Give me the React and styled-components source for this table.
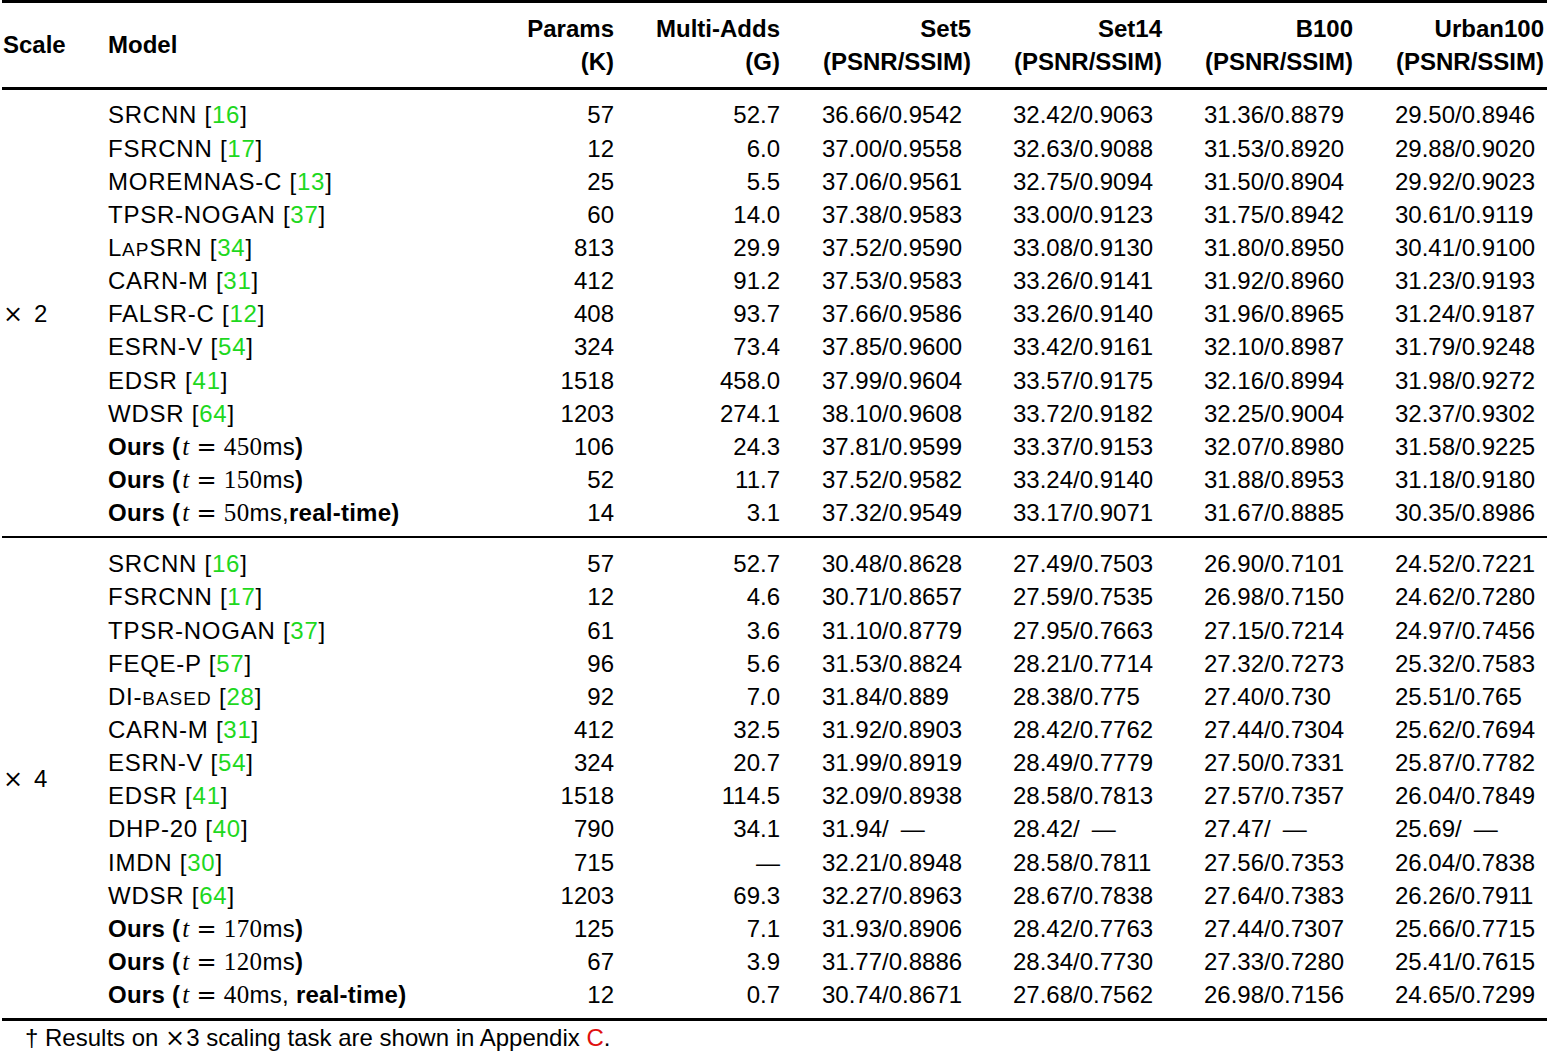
import React from "react";
import styled, { createGlobalStyle } from "styled-components";

const GlobalStyle = createGlobalStyle`
  html, body {
    margin: 0;
    padding: 0;
    background: #ffffff;
  }
  body {
    font-family: "Liberation Sans", Arial, Helvetica, sans-serif;
    color: #000000;
  }
`;

const COLS = "63px 377px 87px 124px 149px 149px 149px 149px";

const Page = styled.div`
  width: 1547px;
  font-size: 24px;
`;

const Rule = styled.div`
  margin-left: 2px;
  height: ${(p) => p.thick}px;
  background: #000000;
`;

const HeaderRow = styled.div`
  display: grid;
  grid-template-columns: ${COLS};
  column-gap: 42px;
  padding: 8.5px 0 9.5px 3px;
  height: 66px;
  font-weight: 700;
  line-height: 33px;
`;

const HeadCell = styled.div`
  display: flex;
  flex-direction: column;
  justify-content: center;
  text-align: ${(p) => (p.right ? "right" : "left")};
  white-space: nowrap;
`;

const Block = styled.div`
  display: grid;
  grid-template-columns: ${COLS};
  grid-auto-rows: 33.17px;
  column-gap: 42px;
  padding: ${(p) => p.top}px 0 ${(p) => p.bottom}px 3px;
  line-height: 33.17px;
`;

const ScaleCell = styled.div`
  grid-column: 1;
  grid-row: 1 / span ${(p) => p.span};
  align-self: center;
  white-space: nowrap;
`;

const Times = styled.span`
  font-family: "DejaVu Serif", "Liberation Serif", serif;
  font-size: 24px;
  margin-right: 11px;
`;

const ModelCell = styled.div`
  grid-column: 2;
  white-space: nowrap;
  letter-spacing: ${(p) => (p.ours ? 0.25 : 0.75)}px;
`;

const NumCell = styled.div`
  text-align: right;
  white-space: nowrap;
`;

const DataCell = styled.div`
  text-align: left;
  white-space: nowrap;
`;

const SmallCaps = styled.span`
  text-transform: uppercase;
  font-size: 19px;
  letter-spacing: 1px;
`;

const Cite = styled.span`
  color: #1ed81e;
`;

const Bold = styled.span`
  font-weight: 700;
`;

const MathT = styled.span`
  font-family: "Liberation Serif", "DejaVu Serif", serif;
  font-style: italic;
  font-size: 25px;
  margin-left: 2px;
`;

const MathEq = styled.span`
  font-family: "DejaVu Serif", "Liberation Serif", serif;
  font-size: 24px;
  margin: 0 7px;
`;

const MathNum = styled.span`
  font-family: "Liberation Serif", "DejaVu Serif", serif;
  font-size: 25px;
  letter-spacing: 0.4px;
`;

const Dash = styled.span`
  margin-left: 12px;
`;

const Footnote = styled.div`
  padding-left: 25px;
  line-height: 33px;
  white-space: nowrap;
`;

const Red = styled.span`
  color: #e01010;
`;

const Cross = styled.span`
  font-family: "DejaVu Serif", "Liberation Serif", serif;
  font-size: 24px;
  margin-right: 1px;
`;

const x2Rows = [
  [{ name: "SRCNN", cite: 16 }, "57", "52.7", "36.66/0.9542", "32.42/0.9063", "31.36/0.8879", "29.50/0.8946"],
  [{ name: "FSRCNN", cite: 17 }, "12", "6.0", "37.00/0.9558", "32.63/0.9088", "31.53/0.8920", "29.88/0.9020"],
  [{ name: "MOREMNAS-C", cite: 13 }, "25", "5.5", "37.06/0.9561", "32.75/0.9094", "31.50/0.8904", "29.92/0.9023"],
  [{ name: "TPSR-NOGAN", cite: 37 }, "60", "14.0", "37.38/0.9583", "33.00/0.9123", "31.75/0.8942", "30.61/0.9119"],
  [{ name: "L", scPart: "ap", rest: "SRN", cite: 34 }, "813", "29.9", "37.52/0.9590", "33.08/0.9130", "31.80/0.8950", "30.41/0.9100"],
  [{ name: "CARN-M", cite: 31 }, "412", "91.2", "37.53/0.9583", "33.26/0.9141", "31.92/0.8960", "31.23/0.9193"],
  [{ name: "FALSR-C", cite: 12 }, "408", "93.7", "37.66/0.9586", "33.26/0.9140", "31.96/0.8965", "31.24/0.9187"],
  [{ name: "ESRN-V", cite: 54 }, "324", "73.4", "37.85/0.9600", "33.42/0.9161", "32.10/0.8987", "31.79/0.9248"],
  [{ name: "EDSR", cite: 41 }, "1518", "458.0", "37.99/0.9604", "33.57/0.9175", "32.16/0.8994", "31.98/0.9272"],
  [{ name: "WDSR", cite: 64 }, "1203", "274.1", "38.10/0.9608", "33.72/0.9182", "32.25/0.9004", "32.37/0.9302"],
  [{ ours: "450" }, "106", "24.3", "37.81/0.9599", "33.37/0.9153", "32.07/0.8980", "31.58/0.9225"],
  [{ ours: "150" }, "52", "11.7", "37.52/0.9582", "33.24/0.9140", "31.88/0.8953", "31.18/0.9180"],
  [{ ours: "50", rt: "," }, "14", "3.1", "37.32/0.9549", "33.17/0.9071", "31.67/0.8885", "30.35/0.8986"],
];

const x4Rows = [
  [{ name: "SRCNN", cite: 16 }, "57", "52.7", "30.48/0.8628", "27.49/0.7503", "26.90/0.7101", "24.52/0.7221"],
  [{ name: "FSRCNN", cite: 17 }, "12", "4.6", "30.71/0.8657", "27.59/0.7535", "26.98/0.7150", "24.62/0.7280"],
  [{ name: "TPSR-NOGAN", cite: 37 }, "61", "3.6", "31.10/0.8779", "27.95/0.7663", "27.15/0.7214", "24.97/0.7456"],
  [{ name: "FEQE-P", cite: 57 }, "96", "5.6", "31.53/0.8824", "28.21/0.7714", "27.32/0.7273", "25.32/0.7583"],
  [{ name: "DI-", scPart: "based", cite: 28 }, "92", "7.0", "31.84/0.889", "28.38/0.775", "27.40/0.730", "25.51/0.765"],
  [{ name: "CARN-M", cite: 31 }, "412", "32.5", "31.92/0.8903", "28.42/0.7762", "27.44/0.7304", "25.62/0.7694"],
  [{ name: "ESRN-V", cite: 54 }, "324", "20.7", "31.99/0.8919", "28.49/0.7779", "27.50/0.7331", "25.87/0.7782"],
  [{ name: "EDSR", cite: 41 }, "1518", "114.5", "32.09/0.8938", "28.58/0.7813", "27.57/0.7357", "26.04/0.7849"],
  [{ name: "DHP-20", cite: 40 }, "790", "34.1", "31.94/-", "28.42/-", "27.47/-", "25.69/-"],
  [{ name: "IMDN", cite: 30 }, "715", "—", "32.21/0.8948", "28.58/0.7811", "27.56/0.7353", "26.04/0.7838"],
  [{ name: "WDSR", cite: 64 }, "1203", "69.3", "32.27/0.8963", "28.67/0.7838", "27.64/0.7383", "26.26/0.7911"],
  [{ ours: "170" }, "125", "7.1", "31.93/0.8906", "28.42/0.7763", "27.44/0.7307", "25.66/0.7715"],
  [{ ours: "120" }, "67", "3.9", "31.77/0.8886", "28.34/0.7730", "27.33/0.7280", "25.41/0.7615"],
  [{ ours: "40", rt: ", " }, "12", "0.7", "30.74/0.8671", "27.68/0.7562", "26.98/0.7156", "24.65/0.7299"],
];

function Model({ m }) {
  if (m.ours) {
    return (
      <ModelCell ours>
        <Bold>Ours (</Bold>
        <MathT>t</MathT>
        <MathEq>=</MathEq>
        <MathNum>{m.ours}</MathNum>
        ms
        {m.rt && (
          <>
            {m.rt}
            <Bold>real-time</Bold>
          </>
        )}
        <Bold>)</Bold>
      </ModelCell>
    );
  }
  return (
    <ModelCell>
      {m.name}
      {m.scPart && <SmallCaps>{m.scPart}</SmallCaps>}
      {m.rest} [<Cite>{m.cite}</Cite>]
    </ModelCell>
  );
}

function Result({ value }) {
  if (value.endsWith("/-")) {
    return (
      <DataCell>
        {value.slice(0, -1)}
        <Dash>—</Dash>
      </DataCell>
    );
  }
  return <DataCell>{value}</DataCell>;
}

function ScaleBlock({ scale, rows, top, bottom }) {
  return (
    <Block top={top} bottom={bottom}>
      <ScaleCell span={rows.length}>
        <Times>×</Times>
        {scale}
      </ScaleCell>
      {rows.map((r, i) => (
        <React.Fragment key={i}>
          <Model m={r[0]} />
          <NumCell>{r[1]}</NumCell>
          <NumCell>{r[2]}</NumCell>
          {r.slice(3).map((v, j) => (
            <Result key={j} value={v} />
          ))}
        </React.Fragment>
      ))}
    </Block>
  );
}

export default function App() {
  return (
    <>
      <GlobalStyle />
      <Page>
        <Rule thick={3} />
        <HeaderRow>
          <HeadCell>Scale</HeadCell>
          <HeadCell>Model</HeadCell>
          <HeadCell right>
            <div>Params</div>
            <div>(K)</div>
          </HeadCell>
          <HeadCell right>
            <div>Multi-Adds</div>
            <div>(G)</div>
          </HeadCell>
          {["Set5", "Set14", "B100", "Urban100"].map((d) => (
            <HeadCell right key={d}>
              <div>{d}</div>
              <div>(PSNR/SSIM)</div>
            </HeadCell>
          ))}
        </HeaderRow>
        <Rule thick={3} />
        <ScaleBlock scale="2" rows={x2Rows} top={8.4} bottom={6.4} />
        <Rule thick={2} />
        <ScaleBlock scale="4" rows={x4Rows} top={9.4} bottom={6.4} />
        <Rule thick={3} />
        <Footnote>
          † Results on <Cross>×</Cross>3 scaling task are shown in Appendix <Red>C</Red>.
        </Footnote>
      </Page>
    </>
  );
}
